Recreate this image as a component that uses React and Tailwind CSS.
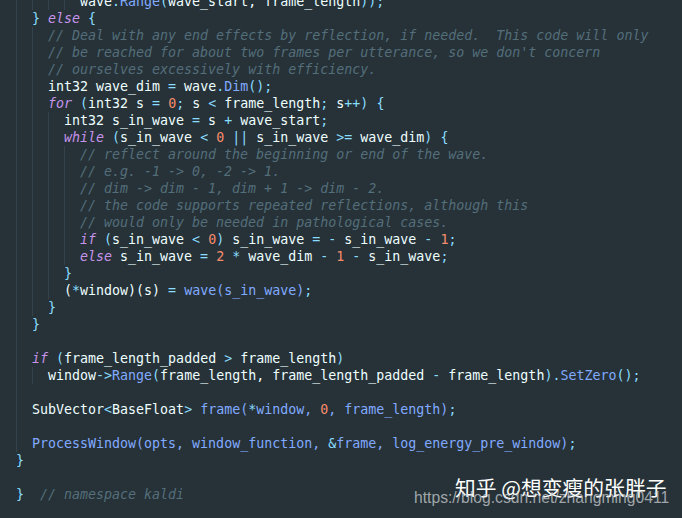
import React from "react";

const C = {
  w: "text-[#eeffff]",
  c: "text-[#89ddff]",
  b: "text-[#82aaff]",
  p: "text-[#c792ea] italic",
  o: "text-[#f78c6c]",
  g: "text-[#546e7a] italic",
};

const lines = [
  [4, [["wave", "w"], [".", "c"], ["Range", "b"], ["(", "c"], ["wave_start, frame_length", "w"], ["))", "c"], [";", "c"]]],
  [1, [["}", "c"], [" ", "w"], ["else", "p"], [" ", "w"], ["{", "c"]]],
  [2, [["// Deal with any end effects by reflection, if needed.  This code will only", "g"]]],
  [2, [["// be reached for about two frames per utterance, so we don't concern", "g"]]],
  [2, [["// ourselves excessively with efficiency.", "g"]]],
  [2, [["int32 wave_dim ", "w"], ["=", "c"], [" wave", "w"], [".", "c"], ["Dim", "b"], ["()", "c"], [";", "c"]]],
  [2, [["for", "p"], [" ", "w"], ["(", "c"], ["int32 s ", "w"], ["=", "c"], [" ", "w"], ["0", "o"], [";", "c"], [" s ", "w"], ["<", "c"], [" frame_length", "w"], [";", "c"], [" s", "w"], ["++", "c"], [")", "c"], [" ", "w"], ["{", "c"]]],
  [3, [["int32 s_in_wave ", "w"], ["=", "c"], [" s ", "w"], ["+", "c"], [" wave_start", "w"], [";", "c"]]],
  [3, [["while", "p"], [" ", "w"], ["(", "c"], ["s_in_wave ", "w"], ["<", "c"], [" ", "w"], ["0", "o"], [" ", "w"], ["||", "c"], [" s_in_wave ", "w"], [">=", "c"], [" wave_dim", "w"], [")", "c"], [" ", "w"], ["{", "c"]]],
  [4, [["// reflect around the beginning or end of the wave.", "g"]]],
  [4, [["// e.g. -1 -> 0, -2 -> 1.", "g"]]],
  [4, [["// dim -> dim - 1, dim + 1 -> dim - 2.", "g"]]],
  [4, [["// the code supports repeated reflections, although this", "g"]]],
  [4, [["// would only be needed in pathological cases.", "g"]]],
  [4, [["if", "p"], [" ", "w"], ["(", "c"], ["s_in_wave ", "w"], ["<", "c"], [" ", "w"], ["0", "o"], [")", "c"], [" s_in_wave ", "w"], ["=", "c"], [" ", "w"], ["-", "c"], [" s_in_wave ", "w"], ["-", "c"], [" ", "w"], ["1", "o"], [";", "c"]]],
  [4, [["else", "p"], [" s_in_wave ", "w"], ["=", "c"], [" ", "w"], ["2", "o"], [" ", "w"], ["*", "c"], [" wave_dim ", "w"], ["-", "c"], [" ", "w"], ["1", "o"], [" ", "w"], ["-", "c"], [" s_in_wave", "w"], [";", "c"]]],
  [3, [["}", "c"]]],
  [3, [["(", "w"], ["*", "c"], ["window)(s) ", "w"], ["=", "c"], [" ", "w"], ["wave(s_in_wave)", "b"], [";", "c"]]],
  [2, [["}", "c"]]],
  [1, [["}", "c"]]],
  [1, []],
  [1, [["if", "p"], [" ", "w"], ["(", "c"], ["frame_length_padded ", "w"], [">", "c"], [" frame_length", "w"], [")", "c"]]],
  [2, [["window", "w"], ["->", "c"], ["Range", "b"], ["(", "c"], ["frame_length, frame_length_padded ", "w"], ["-", "c"], [" frame_length", "w"], [")", "c"], [".", "c"], ["SetZero", "b"], ["();", "c"]]],
  [1, []],
  [1, [["SubVector", "w"], ["<", "c"], ["BaseFloat", "w"], [">", "c"], [" ", "w"], ["frame(", "b"], ["*", "c"], ["window, ", "b"], ["0", "o"], [", frame_length)", "b"], [";", "c"]]],
  [1, []],
  [1, [["ProcessWindow(opts, window_function, ", "b"], ["&", "c"], ["frame, log_energy_pre_window)", "b"], [";", "c"]]],
  [0, [["}", "c"]]],
  [0, []],
  [0, [["}", "c"], ["  ", "w"], ["// namespace kaldi", "g"]]],
];

function Line({ level, tokens }) {
  const guides = [];
  for (let i = 0; i < level; i++) {
    guides.push(
      <span key={"g" + i} className="w-4 shrink-0 self-stretch border-l border-[#34434b]" />
    );
  }
  return (
    <div className="flex h-[17px] items-center whitespace-pre">
      {guides}
      <span>
        {tokens.map(([t, k], i) => (
          <span key={i} className={C[k]}>
            {t}
          </span>
        ))}
      </span>
    </div>
  );
}

export default function App() {
  return (
    <div className="relative w-[682px] h-[518px] overflow-hidden bg-[#263238]">
      <div
        className="mt-[-7px] pl-[16px] text-[13.3px] leading-[17px]"
        style={{ fontFamily: '"DejaVu Sans Mono", monospace' }}
      >
        {lines.map(([lvl, toks], i) => (
          <Line key={i} level={lvl} tokens={toks} />
        ))}
      </div>
      <div
        className="absolute left-[455px] top-[477px] whitespace-nowrap text-[20.8px] leading-none text-white"
        style={{ fontFamily: '"Noto Sans CJK SC", sans-serif' }}
      >
        知乎 @想变瘦的张胖子
      </div>
      <div
        className="absolute left-[414px] top-[490px] whitespace-nowrap text-[15.7px] leading-none text-[#d6dadd]/70"
        style={{ fontFamily: '"Liberation Sans", Arial, sans-serif' }}
      >
        https://blog.csdn.net/zhangming0411
      </div>
    </div>
  );
}
